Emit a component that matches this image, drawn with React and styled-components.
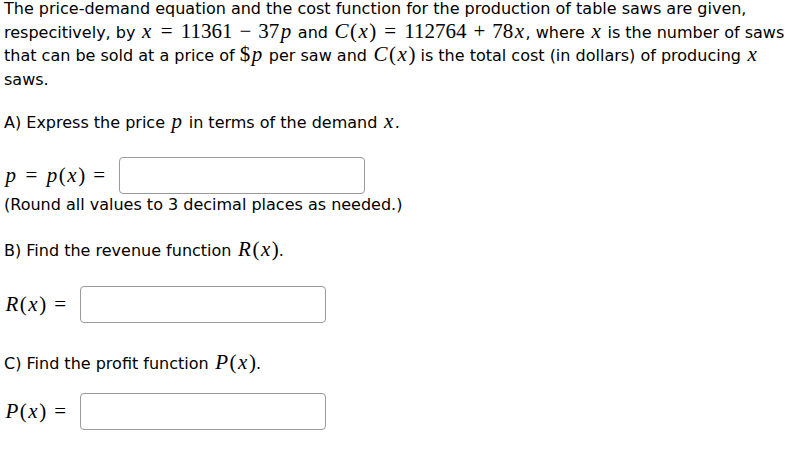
import styled, { createGlobalStyle } from "styled-components";

const Global = createGlobalStyle`
  body {
    margin: 0;
    background: #fff;
    color: #000;
    font-family: "DejaVu Sans", Verdana, sans-serif;
    font-size: 16px;
  }
`;

const Page = styled.div`
  padding: 0 4px;
  width: 800px;
  margin-top: -3px;
`;

const Para = styled.p`
  margin: ${(p) => p.m || "0"};
  line-height: 23.7px;
`;

const M = styled.span`
  font-family: "Liberation Serif", "DejaVu Serif", serif;
  font-size: 21px;
  line-height: 1;
  font-style: ${(p) => (p.up ? "normal" : "italic")};
  padding: 0 ${(p) => (p.up ? "0" : "1.5px")};
`;

const Op = styled.span`
  font-family: "Liberation Serif", "DejaVu Serif", serif;
  font-size: 21px;
  line-height: 1;
  padding: 0 ${(p) => p.gap || "8px"};
`;

const AnswerRow = styled.div`
  display: flex;
  align-items: center;
  margin: ${(p) => p.m || "0"};
`;

const Label = styled.span`
  display: flex;
  align-items: baseline;
  margin-right: 6px;
  white-space: nowrap;
`;

const Box = styled.input`
  width: 246px;
  height: 37px;
  box-sizing: border-box;
  border: 1px solid #9a9a9a;
  border-radius: 4px;
  background: #fff;
  padding: 0 6px;
  font-size: 16px;
  outline: none;
`;

const I = ({ children }) => <M>{children}</M>;
const N = ({ children }) => <M up>{children}</M>;

export default function App() {
  return (
    <Page>
      <Global />
      <Para>
        The price-demand equation and the cost function for the production of table saws are given,
        respecitively, by <I>x</I>
        <Op>=</Op>
        <N>11361</N>
        <Op gap="7px">−</Op>
        <N>37</N>
        <I>p</I> and <I>C</I>
        <N>(</N>
        <I>x</I>
        <N>)</N>
        <Op>=</Op>
        <N>112764</N>
        <Op gap="7px">+</Op>
        <N>78</N>
        <I>x</I>, where <I>x</I> is the number of saws that can be sold at a price of <N>$</N>
        <I>p</I> per saw and <I>C</I>
        <N>(</N>
        <I>x</I>
        <N>)</N> is the total cost (in dollars) of producing <I>x</I> saws.
      </Para>
      <Para m="19px 0 0">
        A) Express the price <I>p</I> in terms of the demand <I>x</I>.
      </Para>
      <AnswerRow m="22px 0 0">
        <Label>
          <I>p</I>
          <Op>=</Op>
          <I>p</I>
          <N>(</N>
          <I>x</I>
          <N>)</N>
          <Op>=</Op>
        </Label>
        <Box type="text" />
      </AnswerRow>
      <Para m="-1px 0 0">(Round all values to 3 decimal places as needed.)</Para>
      <Para m="23px 0 0">
        B) Find the revenue function <I>R</I>
        <N>(</N>
        <I>x</I>
        <N>)</N>.
      </Para>
      <AnswerRow m="23px 0 0">
        <Label>
          <I>R</I>
          <N>(</N>
          <I>x</I>
          <N>)</N>
          <Op>=</Op>
        </Label>
        <Box type="text" />
      </AnswerRow>
      <Para m="29px 0 0">
        C) Find the profit function <I>P</I>
        <N>(</N>
        <I>x</I>
        <N>)</N>.
      </Para>
      <AnswerRow m="17px 0 0">
        <Label>
          <I>P</I>
          <N>(</N>
          <I>x</I>
          <N>)</N>
          <Op>=</Op>
        </Label>
        <Box type="text" />
      </AnswerRow>
    </Page>
  );
}
